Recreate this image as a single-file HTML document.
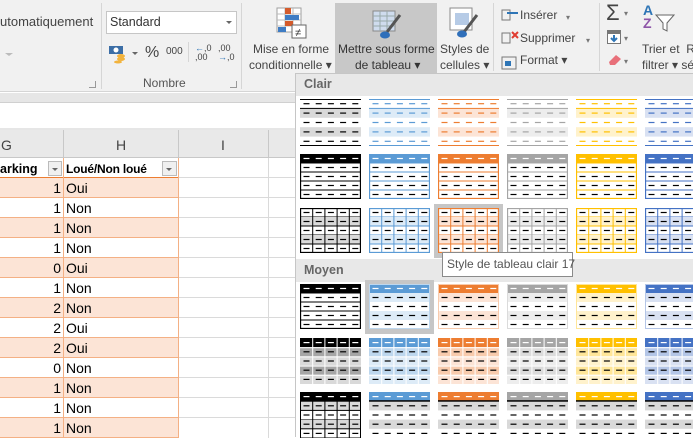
<!DOCTYPE html>
<html><head><meta charset="utf-8">
<style>
*{margin:0;padding:0;box-sizing:border-box}
body{width:693px;height:437px;overflow:hidden;position:relative;background:#fff;font-family:"Liberation Sans",sans-serif;color:#333}
.a{position:absolute;white-space:nowrap}
.rb{font-size:12px;color:#444}
.sep{position:absolute;width:1px;background:#d6d6d6}
.cell{position:absolute;font-size:14px;line-height:20px;color:#000}
</style></head><body>
<div class="a" style="left:0;top:0;width:693px;height:92px;background:#f1f1f1;border-bottom:1px solid #d5d5d5"></div>
<div class="a rb" style="left:0;top:14px;font-size:13px">utomatiquement</div>
<div class="a" style="left:5px;top:53px;width:0;height:0;border-left:4px solid transparent;border-right:4px solid transparent;border-top:3px solid #bbb"></div>
<div class="a" style="left:89px;top:81px;width:7px;height:7px;border-right:1px solid #999;border-bottom:1px solid #999"></div>
<div class="sep" style="left:101px;top:3px;height:86px"></div>
<div class="a" style="left:106px;top:11px;width:131px;height:23px;background:#fff;border:1px solid #c6c6c6"></div>
<div class="a rb" style="left:110px;top:15px;font-size:12.5px;color:#333">Standard</div>
<div class="a" style="left:226px;top:21px;border-left:3.5px solid transparent;border-right:3.5px solid transparent;border-top:3.5px solid #666"></div>
<svg class="a" style="left:108px;top:44px" width="22" height="20"><rect x="1" y="2" width="14" height="8" fill="#3c6ea6"/><circle cx="8" cy="6" r="2.5" fill="#fff"/><ellipse cx="13" cy="12" rx="4" ry="2" fill="#f2b33d"/><ellipse cx="13" cy="15" rx="4" ry="2" fill="#f2b33d"/><ellipse cx="10" cy="18" rx="4" ry="1.5" fill="#f2b33d"/></svg>
<div class="a" style="left:132px;top:52px;border-left:3px solid transparent;border-right:3px solid transparent;border-top:3px solid #666"></div>
<div class="a" style="left:145px;top:44px;font-size:16px;color:#444">%</div>
<div class="a" style="left:166px;top:46px;font-size:10px;color:#444">000</div>
<div class="sep" style="left:188px;top:42px;height:20px"></div>
<div class="a" style="left:195px;top:44px;font-size:9px;line-height:9px;color:#444"><span style="color:#2e75b6">←</span>,0<br>,00</div>
<div class="a" style="left:218px;top:44px;font-size:9px;line-height:9px;color:#444">,00<br><span style="color:#2e75b6">→</span>,0</div>
<div class="a rb" style="left:143px;top:76px;font-size:12px;color:#555">Nombre</div>
<div class="a" style="left:230px;top:81px;width:7px;height:7px;border-right:1px solid #999;border-bottom:1px solid #999"></div>
<div class="sep" style="left:241px;top:3px;height:86px"></div>
<svg class="a" style="left:276px;top:7px" width="32" height="32"><g stroke="#a0a0a0" fill="#fff"><rect x="1" y="1" width="24" height="24"/></g><path d="M1 7H25M1 13H25M1 19H25M9 1V25M17 1V25" stroke="#bbb"/><rect x="9" y="1" width="6" height="6" fill="#d45b2c"/><rect x="9" y="8" width="14" height="5" fill="#3e7cc4"/><rect x="9" y="14" width="8" height="5" fill="#d45b2c"/><rect x="2" y="20" width="8" height="5" fill="#3e7cc4"/><rect x="16" y="18" width="14" height="13" fill="#fff" stroke="#666"/><text x="19" y="29" font-size="11" fill="#333" font-family="Liberation Sans">≠</text></svg>
<div class="a rb" style="left:253px;top:42px">Mise en forme</div>
<div class="a rb" style="left:249px;top:58px">conditionnelle ▾</div>
<div class="a" style="left:335px;top:3px;width:102px;height:70px;background:#c8c8c8"></div>
<svg class="a" style="left:372px;top:10px" width="30" height="30"><rect x="1" y="1" width="22" height="20" fill="#cfdcee" stroke="#8a8a8a"/><path d="M1 6H23M1 11H23M1 16H23M8 1V21M15 1V21" stroke="#9aa"/><path d="M28 5L15 22" stroke="#555" stroke-width="3"/><ellipse cx="13" cy="25" rx="5" ry="3.5" fill="#2f6fba"/></svg>
<div class="a rb" style="left:338px;top:42px;color:#333">Mettre sous forme</div>
<div class="a rb" style="left:355px;top:58px;color:#333">de tableau ▾</div>
<svg class="a" style="left:449px;top:7px" width="30" height="32"><rect x="1" y="1" width="22" height="22" fill="#fff" stroke="#8a8a8a"/><rect x="6" y="6" width="14" height="12" fill="#b6cbe6"/><path d="M28 8L15 25" stroke="#555" stroke-width="3"/><ellipse cx="13" cy="27" rx="5" ry="3.5" fill="#2f6fba"/></svg>
<div class="a rb" style="left:440px;top:42px">Styles de</div>
<div class="a rb" style="left:440px;top:58px">cellules ▾</div>
<div class="sep" style="left:493px;top:3px;height:68px"></div>
<svg class="a" style="left:501px;top:7px" width="18" height="64"><g fill="none" stroke="#777"><rect x="1" y="3" width="8" height="10"/><rect x="1" y="26" width="8" height="10"/><rect x="1" y="50" width="14" height="12"/></g><path d="M6 6H17" stroke="#2e75b6" stroke-width="2"/><path d="M11 25L17 31M17 25L11 31" stroke="#e03c31" stroke-width="2"/><rect x="4" y="54" width="6" height="5" fill="#2e75b6"/></svg>
<div class="a rb" style="left:520px;top:8px">Insérer</div><div class="a" style="left:566px;top:13px;font-size:8px;color:#777">▾</div>
<div class="a rb" style="left:520px;top:31px">Supprimer</div><div class="a" style="left:586px;top:36px;font-size:8px;color:#777">▾</div>
<div class="a rb" style="left:520px;top:53px">Format ▾</div>
<div class="sep" style="left:599px;top:3px;height:68px"></div>
<div class="a" style="left:606px;top:0px;font-size:22px;color:#444">Σ</div>
<div class="a" style="left:624px;top:9px;font-size:8px;color:#777">▾</div>
<svg class="a" style="left:607px;top:30px" width="14" height="14"><rect x="0.5" y="0.5" width="13" height="13" fill="#fff" stroke="#777"/><rect x="1" y="1" width="12" height="3" fill="#777"/><path d="M7 5V11M4 8L7 11L10 8" stroke="#2e75b6" stroke-width="2" fill="none"/></svg>
<div class="a" style="left:624px;top:34px;font-size:8px;color:#777">▾</div>
<svg class="a" style="left:607px;top:52px" width="16" height="14"><path d="M2 10L9 3L14 7L8 13H3Z" fill="#e8707a"/></svg>
<div class="a" style="left:624px;top:57px;font-size:8px;color:#777">▾</div>
<div class="a" style="left:643px;top:4px;font-size:14px;line-height:13px;font-weight:bold;color:#2e75b6">A<br><span style="color:#8e55a8">Z</span></div>
<svg class="a" style="left:655px;top:14px" width="20" height="18"><path d="M1 1H19L12 9V17L8 15V9Z" fill="#fff" stroke="#666"/></svg>
<div class="a rb" style="left:642px;top:42px">Trier et &nbsp;Re</div>
<div class="a rb" style="left:642px;top:58px">filtrer ▾ sé</div>
<div class="a" style="left:0;top:93px;width:693px;height:10px;background:#e6e6e6;border-bottom:1px solid #d0d0d0"></div>
<div class="a" style="left:0;top:128px;width:693px;height:2px;background:#e6e6e6"></div>
<div class="a" style="left:0;top:130px;width:693px;height:28px;background:#e9e9e9;border-bottom:1px solid #c8c8c8"></div>
<div class="sep" style="left:63px;top:130px;height:28px;background:#c8c8c8"></div>
<div class="sep" style="left:178px;top:130px;height:28px;background:#c8c8c8"></div>
<div class="sep" style="left:268px;top:130px;height:28px;background:#c8c8c8"></div>
<div class="a" style="left:1px;top:137px;font-size:14px;color:#444">G</div>
<div class="a" style="left:116px;top:137px;font-size:14px;color:#444">H</div>
<div class="a" style="left:221px;top:137px;font-size:14px;color:#444">I</div>
<div id="grid"></div>
<div class="cell" style="left:0;top:159px;font-weight:bold;font-size:12.5px">arking</div>
<div class="cell" style="left:66px;top:159px;font-weight:bold;font-size:12px;letter-spacing:-0.2px">Loué/Non loué</div>
<div class="a" style="left:48px;top:161px;width:14px;height:15px;background:#f0f0f0;border:1px solid #bbb"></div>
<div class="a" style="left:52px;top:168px;border-left:3px solid transparent;border-right:3px solid transparent;border-top:3px solid #666"></div>
<div class="a" style="left:162px;top:161px;width:15px;height:15px;background:#f0f0f0;border:1px solid #bbb"></div>
<div class="a" style="left:166px;top:168px;border-left:3px solid transparent;border-right:3px solid transparent;border-top:3px solid #666"></div>
<div id="rows"></div>
<div class="a" style="left:295px;top:73px;width:398px;height:364px;background:#fff;border-left:1px solid #c6c6c6;border-top:1px solid #c6c6c6"></div>
<div class="a" style="left:296px;top:74px;width:397px;height:22px;background:#e8e8e8"></div>
<div class="a" style="left:304px;top:77px;font-size:12.5px;font-weight:bold;color:#666">Clair</div>
<div class="a" style="left:296px;top:259px;width:397px;height:23px;background:#e8e8e8"></div>
<div class="a" style="left:304px;top:263px;font-size:12.5px;font-weight:bold;color:#666">Moyen</div>
<div class="a" style="left:434px;top:204px;width:69px;height:54px;background:#c6c6c6"></div>
<div class="a" style="left:365px;top:280px;width:69px;height:54px;background:#c6c6c6"></div>
<div id="gal"></div>
<div class="a" style="left:442px;top:252px;width:131px;height:25px;background:#fff;border:1px solid #8a8a8a;font-size:12px;line-height:23px;padding-left:4px;color:#555">Style de tableau clair 17</div>
<script>
var g='';
for(var y=178;y<437;y+=20)g+='<div class="a" style="left:178px;top:'+(y-1)+'px;width:118px;height:1px;background:#dadada"></div>';
g+='<div class="sep" style="left:268px;top:158px;height:280px;background:#dadada"></div>';
document.getElementById('grid').innerHTML=g;
var d=[[1,'Oui'],[1,'Non'],[1,'Non'],[1,'Non'],[0,'Oui'],[1,'Non'],[2,'Non'],[2,'Oui'],[2,'Oui'],[0,'Non'],[1,'Non'],[1,'Non'],[1,'Non']];
var r='<div class="a" style="left:0;top:177px;width:179px;height:2px;background:#ed7d31"></div>';
d.forEach(function(v,i){var y=178+i*20;
r+='<div class="a" style="left:0;top:'+y+'px;width:179px;height:20px;background:'+(i%2?'#fff':'#fce4d6')+';border-bottom:1px solid #f4b084"></div>';
r+='<div class="cell" style="left:0;width:61px;text-align:right;top:'+y+'px">'+v[0]+'</div><div class="cell" style="left:66px;top:'+y+'px">'+v[1]+'</div>';});
r+='<div class="a" style="left:63px;top:158px;width:1px;height:280px;background:#f4b084"></div><div class="a" style="left:178px;top:158px;width:1px;height:280px;background:#f4b084"></div>';
document.getElementById('rows').innerHTML=r;
var A=['#000','#5b9bd5','#ed7d31','#a5a5a5','#ffc000','#4472c4'];
var L=['#d9d9d9','#ddebf7','#fce4d6','#ededed','#fff2cc','#d9e1f2'];
var M=['#a6a6a6','#bdd7ee','#f8cbad','#dbdbdb','#ffe699','#b4c6e7'];
function th(t,c,x,y,h){var w=61,rh=h/5,s='<svg class="a" style="left:'+x+'px;top:'+y+'px" width="'+w+'" height="'+h+'"><rect width="'+w+'" height="'+h+'" fill="#fff"/>';
for(var i=0;i<5;i++){var y0=i*rh,f='none',dc='#000';
if(t==0){if(i%2)f=L[c];dc=c==0?'#000':A[c];}
if(t==1){if(i==0){f=A[c];dc='#fff';}}
if(t==2){if(i%2)f=L[c];}
if(t==3){if(i==0){f=A[c];dc='#fff';}else if(i%2)f=L[c];}
if(t==4){if(i==0){f=A[c];dc='#fff';}else f=(i%2?M[c]:L[c]);}
if(t==5){if(i==0){f=A[c];dc='#fff';}else if(i%2)f='#d9d9d9';}
if(f!='none')s+='<rect x="0" y="'+y0+'" width="'+w+'" height="'+rh+'" fill="'+f+'"/>';
for(var k=0;k<5;k++)s+='<rect x="'+(k*12.2+3.5)+'" y="'+(y0+rh/2-0.6)+'" width="6" height="1.2" fill="'+dc+'"/>';
if(t==1||t==2||(t==5&&c==0))s+='<rect x="0" y="'+(y0+rh-0.5)+'" width="'+w+'" height="1" fill="'+(t==5?'#000':A[c])+'"/>';
if(t==4&&i>0)s+='<rect x="0" y="'+(y0)+'" width="'+w+'" height="1" fill="#fff"/>';}
if(t==0){s+='<rect x="0" y="0" width="'+w+'" height="1" fill="'+A[c]+'"/><rect x="0" y="'+(rh-0.5)+'" width="'+w+'" height="1" fill="'+A[c]+'"/><rect x="0" y="'+(h-1)+'" width="'+w+'" height="1" fill="'+A[c]+'"/>';}
if(t==1||t==2||t==3)s+='<rect x="0.5" y="0.5" width="'+(w-1)+'" height="'+(h-1)+'" fill="none" stroke="'+(t==3&&c>0?M[c]:A[c])+'" stroke-width="'+(t==3?1:1.3)+'"/>';
if(t==2||(t==5&&c==0))for(var k=1;k<5;k++)s+='<rect x="'+(k*12.2)+'" y="'+(t==5?rh:0)+'" width="1" height="'+h+'" fill="'+(t==5?'#000':A[c])+'"/>';
if(t==4)for(var k=1;k<5;k++)s+='<rect x="'+(k*12.2)+'" y="0" width="1" height="'+h+'" fill="#fff"/>';
if(t==5){s+='<rect x="0" y="'+(rh-1)+'" width="'+w+'" height="1.5" fill="#000"/>';if(c==0)s+='<rect x="0.5" y="0.5" width="'+(w-1)+'" height="'+h+'" fill="none" stroke="#000"/>';}
return s+'</svg>';}
var X=[300,369,438,507,576,645],o='';
var R=[[0,99,47],[1,154,45],[2,208,45],[3,284,45],[4,338,46],[5,392,46]];
R.forEach(function(q){X.forEach(function(x,c){var t=q[0];if(t==3&&c==0)t=1;o+=th(t,c,x,q[1],q[2]);});});
document.getElementById('gal').innerHTML=o;
</script>
</body></html>
